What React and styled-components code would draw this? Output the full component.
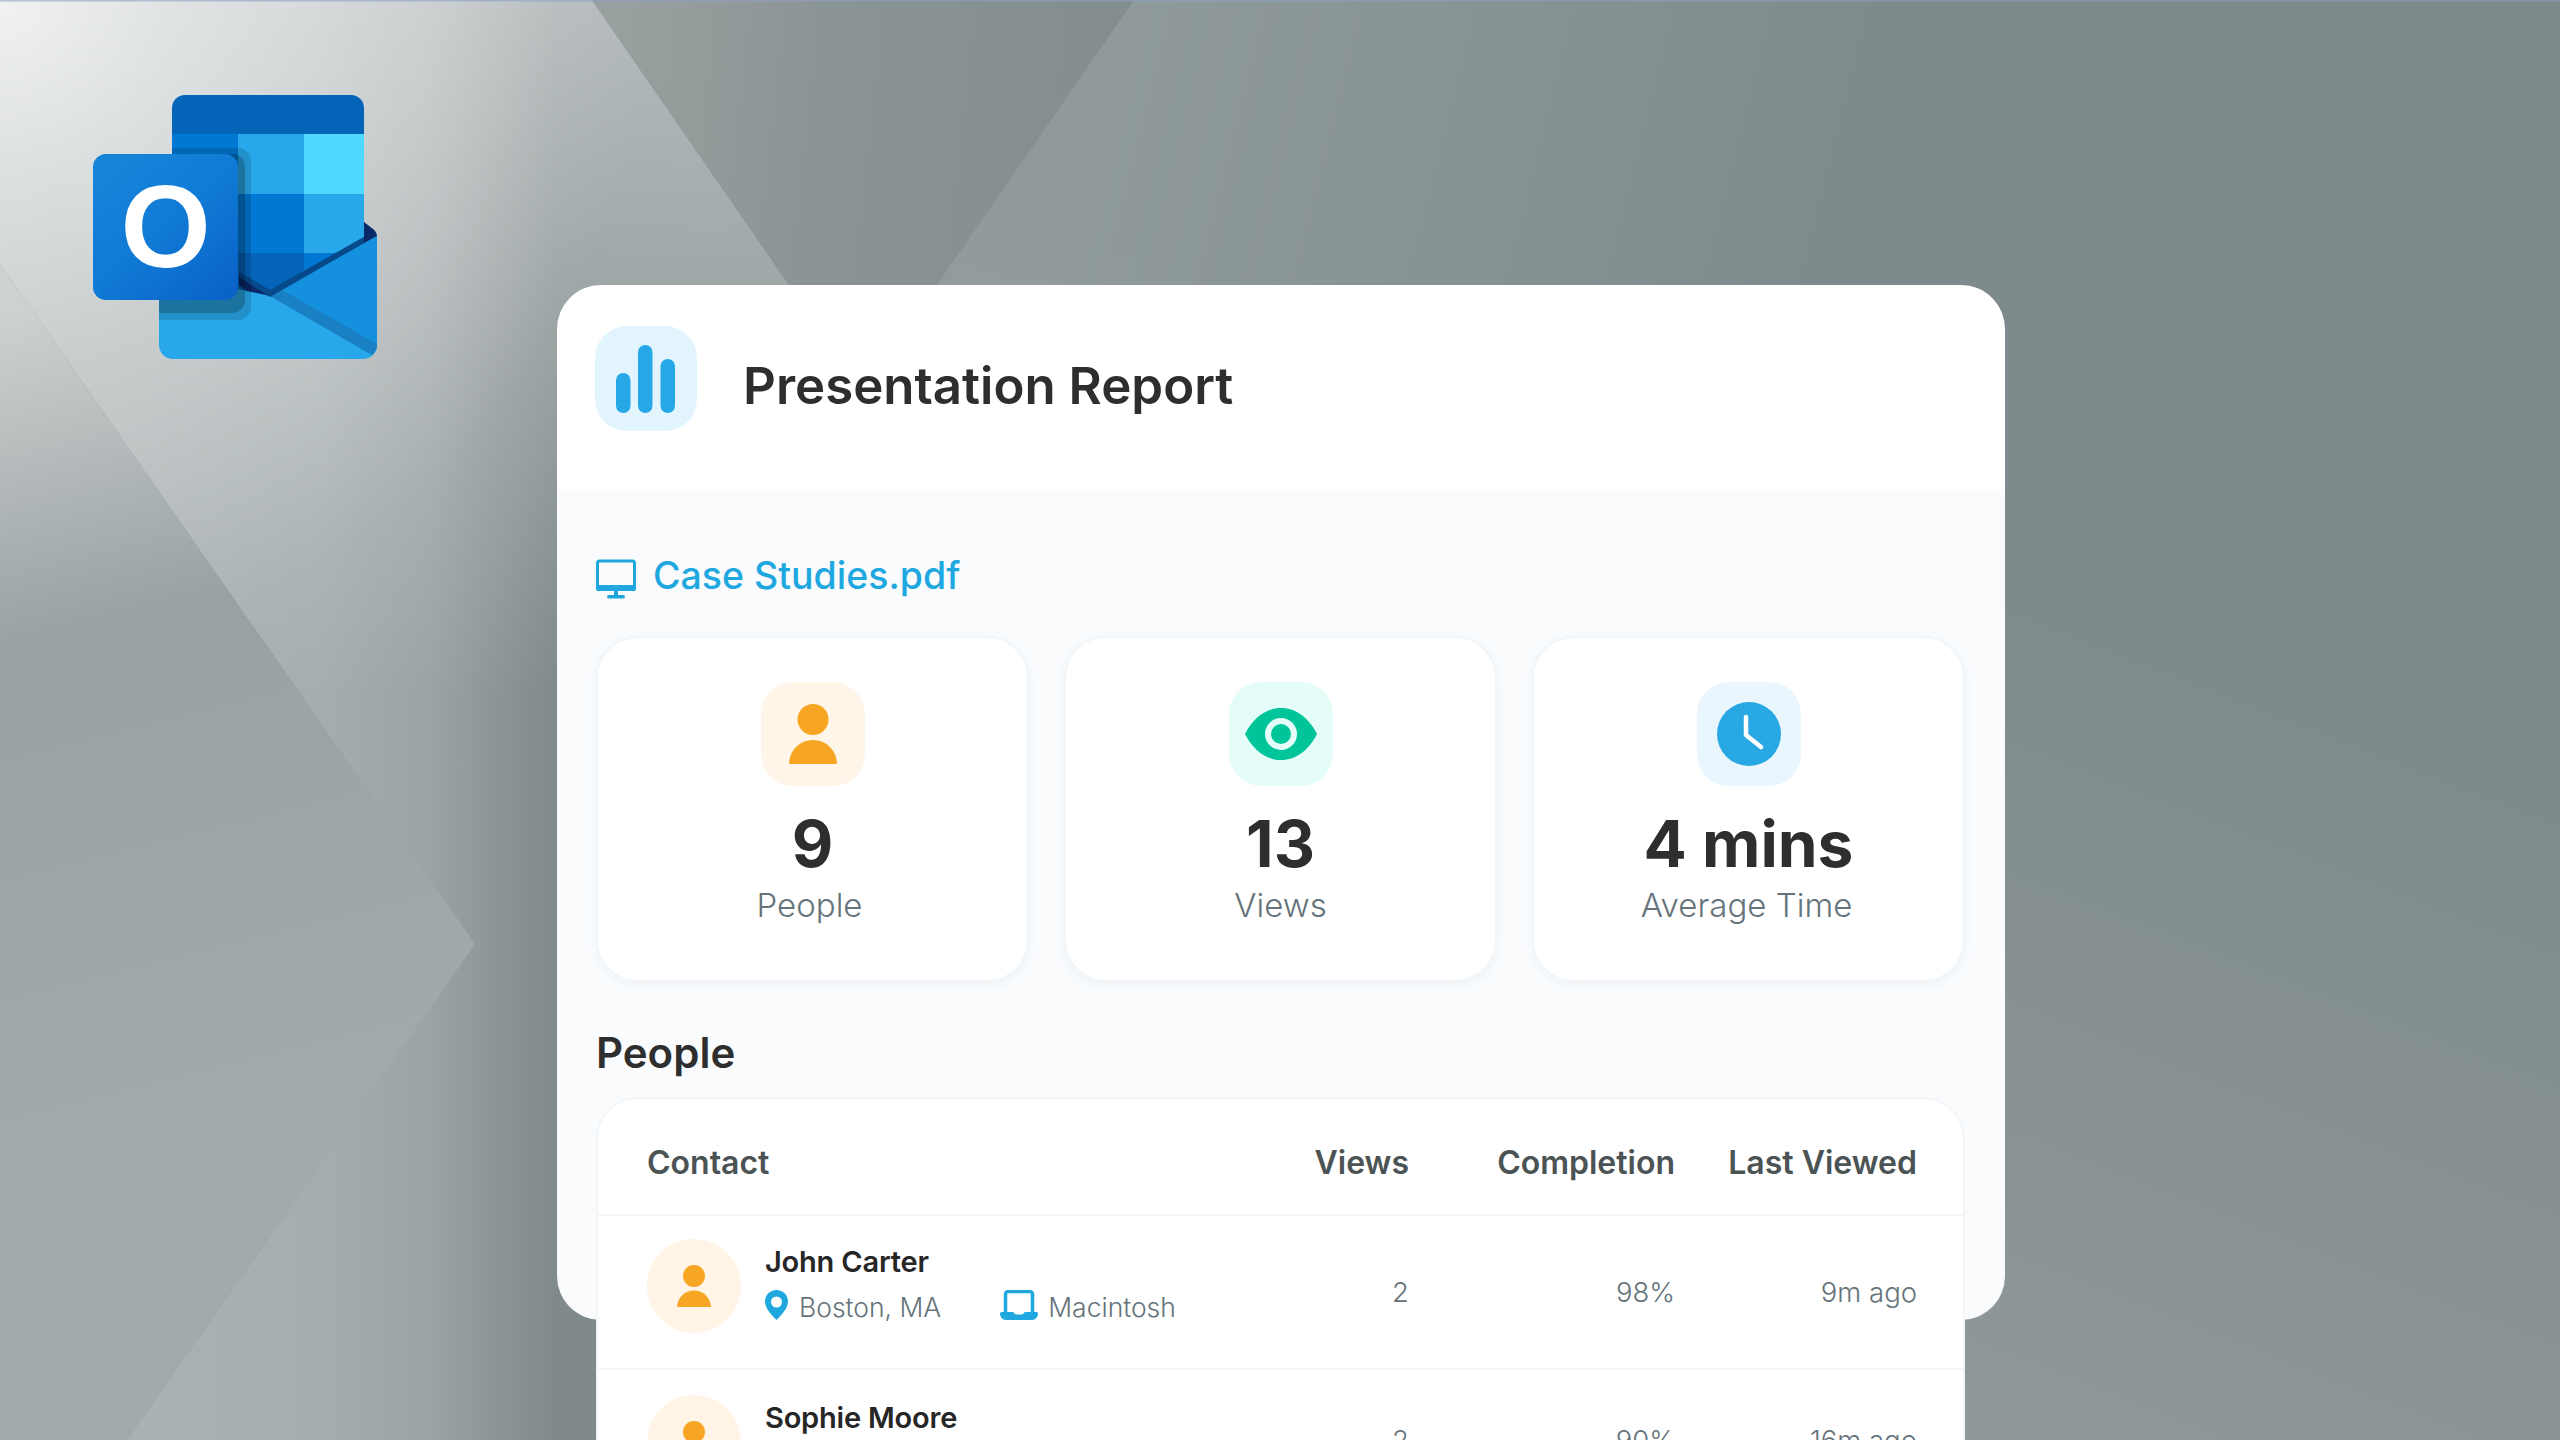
import React from "react";
import styled, { createGlobalStyle } from "styled-components";

const GlobalStyle = createGlobalStyle`
  html, body {
    margin: 0;
    padding: 0;
    background: #7f8b8b;
  }
  * {
    box-sizing: border-box;
  }
`;

const Page = styled.div`
  position: relative;
  width: 2560px;
  height: 1440px;
  overflow: hidden;
  display: grid;
  grid-template-columns: 557px 1448px;
  font-family: Inter, "Open Sans", sans-serif;
  color: #2e2e2e;
`;

const Backdrop = styled.svg`
  position: absolute;
  inset: 0;
`;

const LogoColumn = styled.div`
  position: relative;
  padding: 94px 0 0 93px;
`;

const Card = styled.main`
  position: relative;
  margin-top: 285px;
  height: 1035px;
  display: flex;
  flex-direction: column;
`;

const Header = styled.header`
  height: 205px;
  flex: none;
  background: #fff;
  border-radius: 44px 44px 0 0;
  padding: 41px 0 0 38px;
  display: flex;
  align-items: flex-start;
  gap: 46px;
`;

const ReportTile = styled.div`
  width: 102px;
  height: 105px;
  border-radius: 32px;
  background: #e2f4fe;
  display: flex;
  align-items: center;
  justify-content: center;
`;

const Title = styled.h1`
  margin: 28px 0 0;
  font-size: 51px;
  line-height: 64px;
  font-weight: 600;
  color: #2e2e2e;
`;

const Body = styled.div`
  flex: 1;
  min-height: 0;
  background: #f9fbfd;
  border-radius: 0 0 44px 44px;
  padding: 62px 40px 0 39px;
`;

const FileRow = styled.div`
  display: flex;
  align-items: center;
  gap: 16px;
  height: 48px;
  margin-left: -1px;

  svg {
    margin-top: 5px;
  }
`;

const FileName = styled.span`
  font-size: 37.5px;
  line-height: 48px;
  font-weight: 500;
  color: #1fa8e0;
`;

const Stats = styled.section`
  display: grid;
  grid-template-columns: repeat(3, 1fr);
  gap: 35px;
  margin-top: 36px;
`;

const StatCard = styled.div`
  height: 346px;
  background: #fff;
  border: 2px solid #f3f6f9;
  border-radius: 42px;
  box-shadow: 0 3px 8px rgba(200, 215, 225, 0.2);
  padding-top: 44px;
  display: flex;
  flex-direction: column;
  align-items: center;
`;

const StatTile = styled.div`
  width: 104px;
  height: 104px;
  border-radius: 32px;
  background: ${(p) => p.$bg};
  display: flex;
  align-items: center;
  justify-content: center;
`;

const StatValue = styled.div`
  margin-top: 23px;
  font-size: 64px;
  line-height: 70px;
  font-weight: 700;
  color: #2e2e2e;
`;

const StatLabel = styled.div`
  margin-top: 5px;
  margin-right: ${(p) => p.$shift || 0}px;
  font-size: 33px;
  line-height: 42px;
  font-weight: 300;
  color: #65737a;
`;

const SectionTitle = styled.h2`
  margin: 45px 0 0;
  font-size: 42px;
  line-height: 52px;
  font-weight: 600;
  color: #2e2e2e;
`;

const Table = styled.section`
  margin-top: 18px;
  background: #fff;
  border: 2px solid #f3f6f9;
  border-bottom: 0;
  border-radius: 42px 42px 0 0;
`;

const Row = styled.div`
  display: grid;
  grid-template-columns: 1fr 120px 266px 242px;
  padding: 0 46px 0 49px;
  height: ${(p) => p.$height}px;
  border-bottom: 2px solid #f4f6f8;
`;

const HeadCell = styled.div`
  padding-top: 44px;
  font-size: 32px;
  line-height: 40px;
  font-weight: 600;
  color: #4b5355;
  text-align: ${(p) => (p.$left ? "left" : "right")};
  white-space: nowrap;
`;

const ValueCell = styled.div`
  padding-top: ${(p) => p.$top}px;
  font-size: 27.5px;
  line-height: 36px;
  font-weight: 300;
  color: #65737a;
  text-align: right;
  white-space: nowrap;
`;

const Contact = styled.div`
  padding-top: ${(p) => p.$top}px;
  display: flex;
  align-items: flex-start;
  gap: 24px;
`;

const Avatar = styled.div`
  width: 94px;
  height: 94px;
  flex: none;
  border-radius: 50%;
  background: #fff4e6;
  display: flex;
  align-items: center;
  justify-content: center;
`;

const Who = styled.div`
  padding-top: 5px;
`;

const Name = styled.div`
  font-size: 29px;
  line-height: 36px;
  font-weight: 600;
  letter-spacing: -0.2px;
  color: #262626;
`;

const Meta = styled.div`
  margin-top: 10px;
  display: flex;
  align-items: center;
  gap: 59px;
`;

const MetaItem = styled.div`
  display: flex;
  align-items: center;
  gap: ${(p) => p.$gap}px;
  font-size: 26.5px;
  line-height: 32px;
  font-weight: 300;
  color: #65737a;

  svg {
    margin-bottom: 4px;
  }
`;

const OutlookLogo = () => (
  <svg width="290" height="270" viewBox="93 94 290 270">
    <defs>
      <linearGradient id="tileBlue" x1="110" y1="160" x2="225" y2="295" gradientUnits="userSpaceOnUse">
        <stop offset="0" stopColor="#1784d9" />
        <stop offset="0.5" stopColor="#107ad5" />
        <stop offset="1" stopColor="#0a63c9" />
      </linearGradient>
    </defs>
    {/* calendar sheet */}
    <path d="M172 134V108a13 13 0 0 1 13-13h166a13 13 0 0 1 13 13v26z" fill="#0364b8" />
    <rect x="172" y="134" width="66" height="60" fill="#0078d4" />
    <rect x="238" y="134" width="66" height="60" fill="#28a8ea" />
    <rect x="304" y="134" width="60" height="60" fill="#50d9ff" />
    <rect x="172" y="194" width="66" height="110" fill="#0364b8" />
    <rect x="238" y="194" width="66" height="59" fill="#0078d4" />
    <rect x="304" y="194" width="60" height="59" fill="#28a8ea" />
    <rect x="238" y="253" width="66" height="50" fill="#0364b8" />
    <rect x="304" y="253" width="60" height="30" fill="#0078d4" />
    {/* envelope */}
    <path d="M364 222l9 7a10 10 0 0 1 4 8v8L270 310 239 285V272l31 19 94-54z" fill="#0a2767" />
    <path d="M159 272l111 24 107-60v109a14 14 0 0 1-14 14H173a14 14 0 0 1-14-14z" fill="#28a8ea" />
    <path d="M377 236L270 296l102 59a14 14 0 0 0 5-10z" fill="#1490df" />
    <path d="M270 296l12-6 95 54v1a14 14 0 0 1-5 10z" fill="#1a80c4" />
    <path d="M239 272l31 18 94-53v6l-94 54-31-20z" fill="#064a8c" />
    {/* tile shadow */}
    <path d="M172 148h66a13 13 0 0 1 13 13v146a13 13 0 0 1-13 13H159v-30h13z" fill="#000" opacity="0.14" />
    <path d="M172 154h60a13 13 0 0 1 13 13v133a13 13 0 0 1-13 13H159v-23h13z" fill="#000" opacity="0.2" />
    <rect x="93" y="154" width="145" height="146" rx="13" fill="url(#tileBlue)" />
    <text x="165.5" y="267" textAnchor="middle" fontFamily="'Liberation Sans', sans-serif" fontWeight="700" fontSize="116" fill="#fff">
      O
    </text>
  </svg>
);

const BarsIcon = () => (
  <svg width="60" height="68" viewBox="0 0 60 68">
    <rect x="0" y="28" width="14.5" height="40" rx="7.25" fill="#26a8e6" />
    <rect x="22" y="0" width="14.5" height="68" rx="7.25" fill="#26a8e6" />
    <rect x="44.5" y="14" width="14.5" height="54" rx="7.25" fill="#26a8e6" />
  </svg>
);

const MonitorIcon = () => (
  <svg width="42" height="40" viewBox="0 0 42 40">
    <rect x="2.5" y="2" width="37" height="28" rx="2" fill="none" stroke="#1fa8e0" strokeWidth="3" />
    <rect x="1" y="26" width="40" height="6" rx="2" fill="#1fa8e0" />
    <rect x="19" y="31" width="4" height="6" fill="#1fa8e0" />
    <rect x="12" y="36" width="18" height="3.5" rx="1.7" fill="#1fa8e0" />
  </svg>
);

const PersonIcon = ({ width }) => (
  <svg width={width} height={width * 1.25} viewBox="0 0 48 60">
    <circle cx="24" cy="15.5" r="15.5" fill="#f6a623" />
    <path d="M0 60a24 24 0 0 1 48 0z" fill="#f6a623" />
  </svg>
);

const EyeIcon = () => (
  <svg width="72" height="52" viewBox="0 0 72 52">
    <path d="M0 26C8 10 21 0 36 0s28 10 36 26C64 42 51 52 36 52S8 42 0 26z" fill="#00c49a" />
    <circle cx="36" cy="26" r="13" fill="none" stroke="#e5fdf8" strokeWidth="6" />
  </svg>
);

const ClockIcon = () => (
  <svg width="64" height="64" viewBox="0 0 64 64">
    <circle cx="32" cy="32" r="32" fill="#28a8e2" />
    <path d="M29 15v18l15 12" fill="none" stroke="#fff" strokeWidth="4.5" strokeLinecap="round" strokeLinejoin="round" />
  </svg>
);

const PinIcon = () => (
  <svg width="23" height="30" viewBox="0 0 23 30">
    <path
      d="M11.5 0C5 0 0 5 0 11.5 0 19 8 26.500 11.500 30 15 26.500 23 19 23 11.500 23 5 18 0 11.500 0zm0 6.500a5.500 5.500 0 1 1 0 11 5.500 5.500 0 0 1 0-11z"
      fill="#1fa8e0"
      fillRule="evenodd"
    />
  </svg>
);

const LaptopIcon = () => (
  <svg width="38" height="30" viewBox="0 0 38 30">
    <path d="M5.500 23V4a2.500 2.500 0 0 1 2.500-2.500h22A2.500 2.500 0 0 1 32.500 4v19" fill="none" stroke="#1fa8e0" strokeWidth="3.500" />
    <path d="M0 23.500a1.500 1.500 0 0 1 1.500-1.500H13c1 0 1.500 2.500 3 2.500h6c1.500 0 2-2.500 3-2.500h11.500a1.500 1.500 0 0 1 1.500 1.500c0 3.500-2.500 6.500-6 6.500H6c-3.500 0-6-3-6-6.500z" fill="#1fa8e0" />
  </svg>
);

const BackdropArt = () => (
  <Backdrop width="2560" height="1440" viewBox="0 0 2560 1440">
    <defs>
      <linearGradient id="base" x1="2010" y1="1440" x2="2300" y2="700" gradientUnits="userSpaceOnUse">
        <stop offset="0" stopColor="#909899" />
        <stop offset="1" stopColor="#7e8a8b" />
      </linearGradient>
      <linearGradient id="topSheen" x1="1134" y1="0" x2="1850" y2="180" gradientUnits="userSpaceOnUse">
        <stop offset="0" stopColor="#fff" stopOpacity="0.14" />
        <stop offset="1" stopColor="#fff" stopOpacity="0" />
      </linearGradient>
      <linearGradient id="sideFalloff" x1="0" y1="0" x2="863" y2="0" gradientUnits="userSpaceOnUse">
        <stop offset="0" stopColor="#adb4b5" />
        <stop offset="0.147" stopColor="#abb2b3" />
        <stop offset="0.371" stopColor="#a5adae" />
        <stop offset="0.498" stopColor="#9ba3a4" />
        <stop offset="0.579" stopColor="#8c9495" />
        <stop offset="0.643" stopColor="#808a8b" />
        <stop offset="1" stopColor="#7f8b8b" />
      </linearGradient>
      <linearGradient id="topGlare" x1="0" y1="0" x2="0" y2="700" gradientUnits="userSpaceOnUse">
        <stop offset="0" stopColor="#fff" stopOpacity="0.42" />
        <stop offset="1" stopColor="#fff" stopOpacity="0" />
      </linearGradient>
      <radialGradient id="cornerGlare" cx="0" cy="0" r="650" gradientUnits="userSpaceOnUse">
        <stop offset="0" stopColor="#fff" stopOpacity="0.7" />
        <stop offset="0.25" stopColor="#fff" stopOpacity="0.4" />
        <stop offset="0.55" stopColor="#fff" stopOpacity="0.18" />
        <stop offset="1" stopColor="#fff" stopOpacity="0" />
      </radialGradient>
      <linearGradient id="leftFacet" x1="50" y1="300" x2="250" y2="1100" gradientUnits="userSpaceOnUse">
        <stop offset="0" stopColor="#cdd1d1" />
        <stop offset="0.4" stopColor="#99a1a2" />
        <stop offset="1" stopColor="#a2aaab" />
      </linearGradient>
      <linearGradient id="wedge" x1="592" y1="0" x2="1134" y2="60" gradientUnits="userSpaceOnUse">
        <stop offset="0" stopColor="#9aa1a1" />
        <stop offset="0.45" stopColor="#8b9494" />
        <stop offset="1" stopColor="#838d8d" />
      </linearGradient>
    </defs>
    <rect width="2560" height="1440" fill="url(#base)" />
    <rect x="863" width="1697" height="420" fill="url(#topSheen)" />
    <polygon points="0,0 592,0 863,392 863,1440 127,1440 475,944 0,264" fill="url(#sideFalloff)" />
    <polygon points="0,0 592,0 863,392 863,944 475,944 0,264" fill="url(#topGlare)" />
    <polygon points="0,0 592,0 863,392 863,944 475,944 0,264" fill="url(#cornerGlare)" />
    <polygon points="0,264 475,944 127,1440 0,1440" fill="url(#leftFacet)" />
    <polygon points="592,0 1134,0 863,392" fill="url(#wedge)" />
    <rect width="2560" height="1.500" fill="#8da0c8" opacity="0.6" />
  </Backdrop>
);

const people = [
  { name: "John Carter", views: "2", completion: "98%", last: "9m ago", top: 23, valueTop: 58, meta: true },
  { name: "Sophie Moore", views: "2", completion: "90%", last: "16m ago", top: 25, valueTop: 52 },
];

export default function App() {
  return (
    <Page>
      <GlobalStyle />
      <BackdropArt />
      <LogoColumn>
        <OutlookLogo />
      </LogoColumn>
      <Card>
        <Header>
          <ReportTile>
            <BarsIcon />
          </ReportTile>
          <Title>Presentation Report</Title>
        </Header>
        <Body>
          <FileRow>
            <MonitorIcon />
            <FileName>Case Studies.pdf</FileName>
          </FileRow>
          <Stats>
            <StatCard>
              <StatTile $bg="#fff5e8">
                <PersonIcon width={48} />
              </StatTile>
              <StatValue>9</StatValue>
              <StatLabel $shift={6}>People</StatLabel>
            </StatCard>
            <StatCard>
              <StatTile $bg="#e5fdf8">
                <EyeIcon />
              </StatTile>
              <StatValue>13</StatValue>
              <StatLabel>Views</StatLabel>
            </StatCard>
            <StatCard>
              <StatTile $bg="#e9f6fe">
                <ClockIcon />
              </StatTile>
              <StatValue>4 mins</StatValue>
              <StatLabel $shift={4}>Average Time</StatLabel>
            </StatCard>
          </Stats>
          <SectionTitle>People</SectionTitle>
          <Table>
            <Row $height={117}>
              <HeadCell $left>Contact</HeadCell>
              <HeadCell>Views</HeadCell>
              <HeadCell>Completion</HeadCell>
              <HeadCell>Last Viewed</HeadCell>
            </Row>
            {people.map((p) => (
              <Row key={p.name} $height={154}>
                <Contact $top={p.top}>
                  <Avatar>
                    <PersonIcon width={34} />
                  </Avatar>
                  <Who>
                    <Name>{p.name}</Name>
                    {p.meta && (
                      <Meta>
                        <MetaItem $gap={11}>
                          <PinIcon />
                          Boston, MA
                        </MetaItem>
                        <MetaItem $gap={10}>
                          <LaptopIcon />
                          Macintosh
                        </MetaItem>
                      </Meta>
                    )}
                  </Who>
                </Contact>
                <ValueCell $top={p.valueTop}>{p.views}</ValueCell>
                <ValueCell $top={p.valueTop}>{p.completion}</ValueCell>
                <ValueCell $top={p.valueTop}>{p.last}</ValueCell>
              </Row>
            ))}
          </Table>
        </Body>
      </Card>
    </Page>
  );
}
